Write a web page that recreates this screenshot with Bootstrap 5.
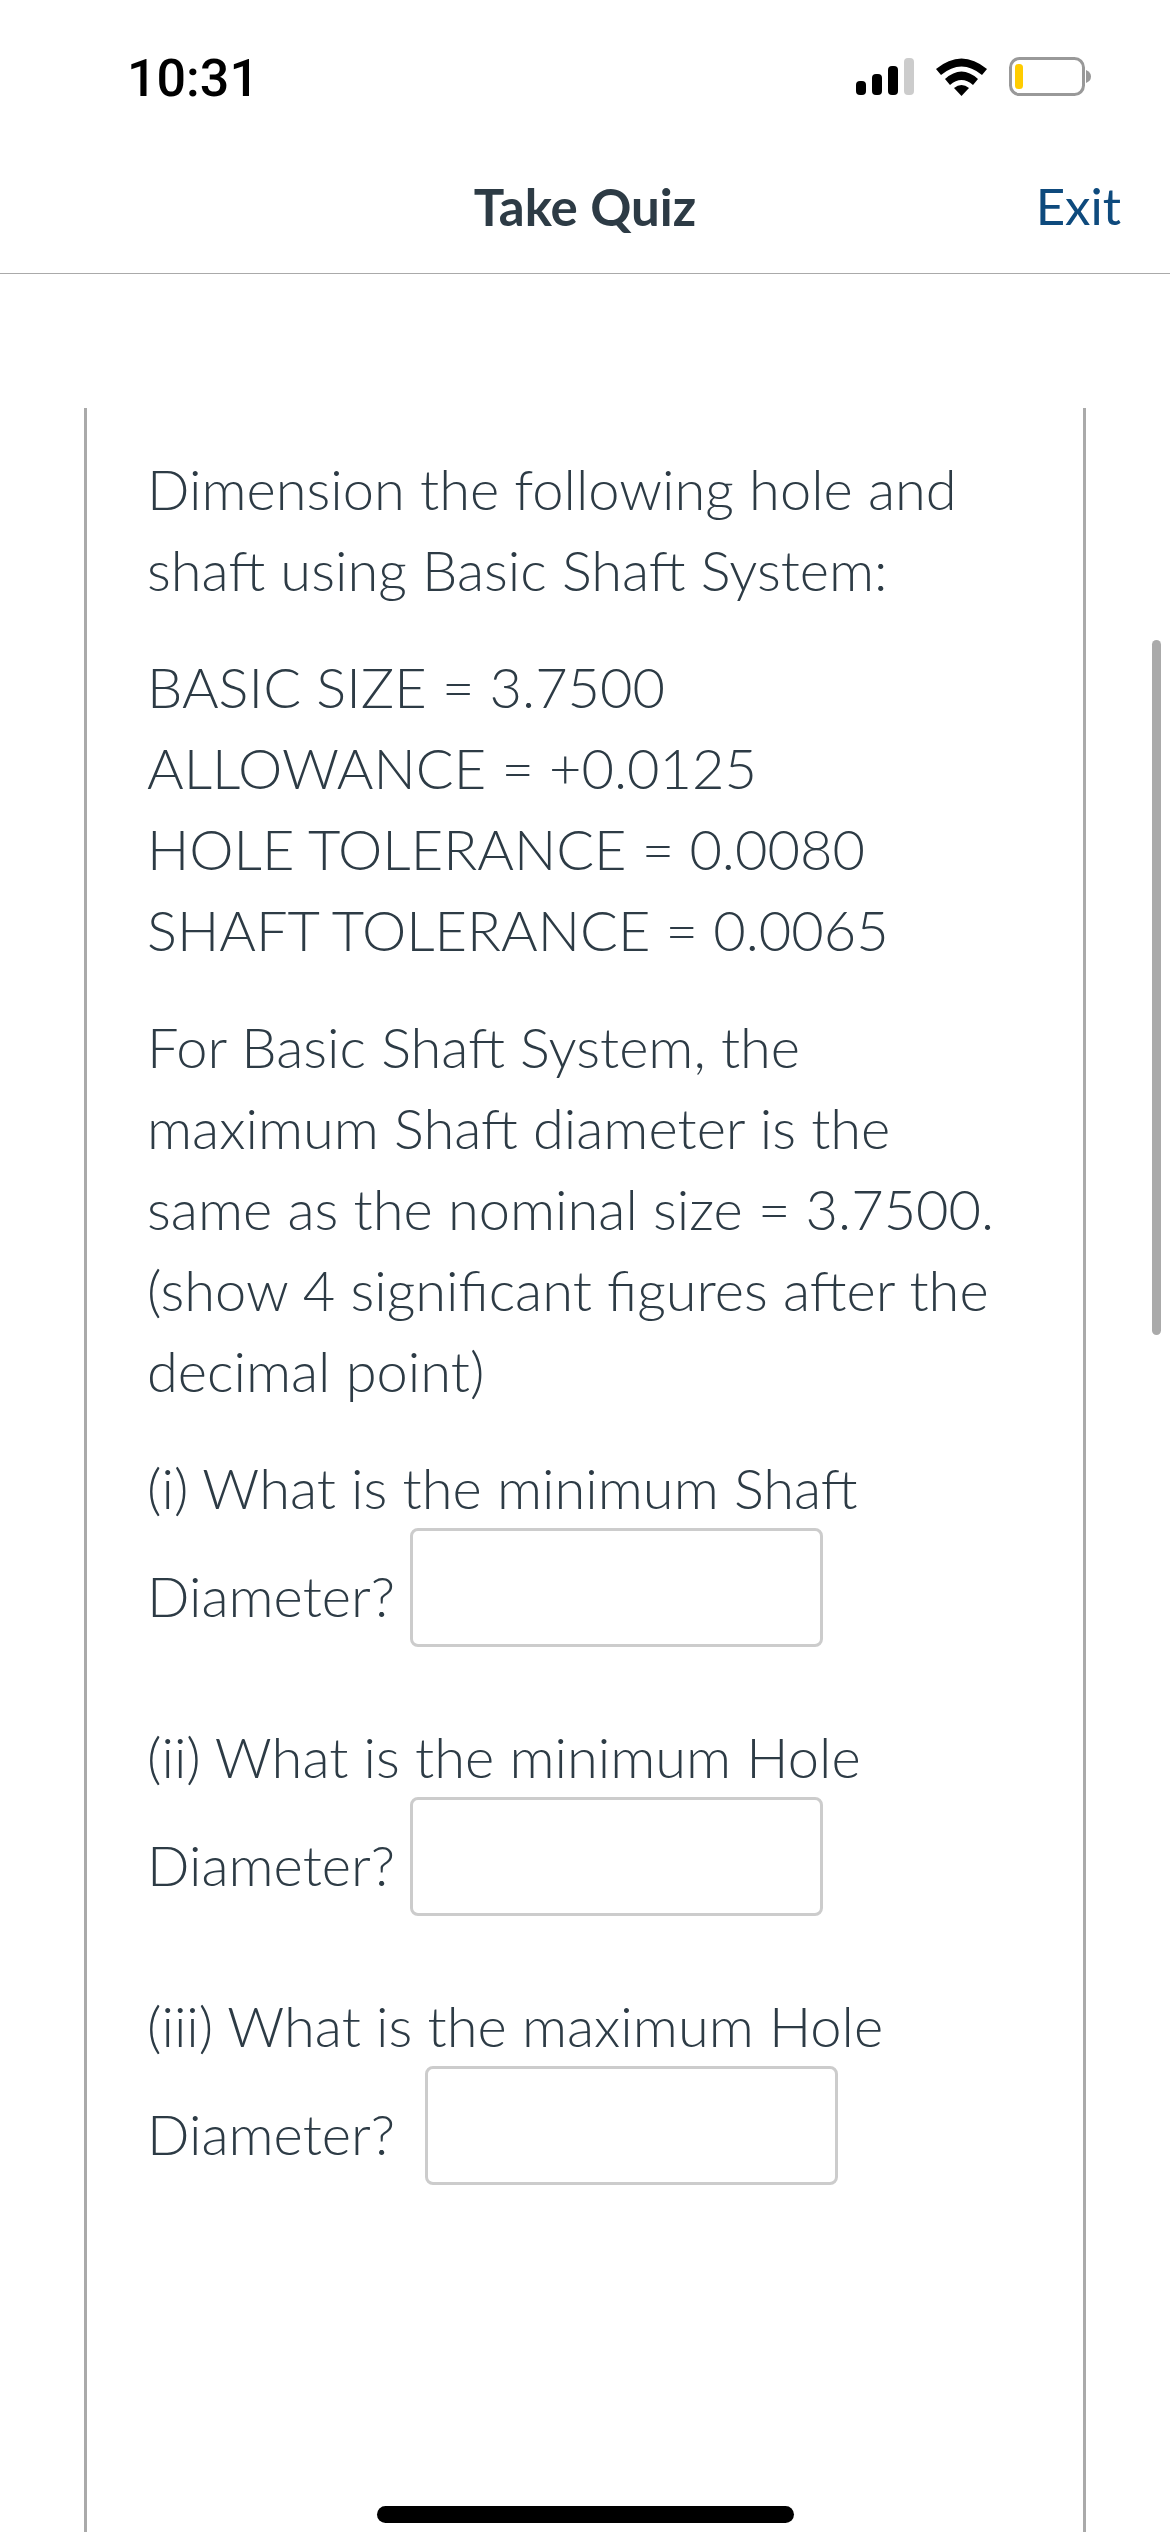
<!DOCTYPE html>
<html lang="en">
<head>
    <meta charset="UTF-8">
    <meta name="viewport" content="width=device-width, initial-scale=1.0">
    <title>Take Quiz</title>
    <link href="https://cdn.jsdelivr.net/npm/bootstrap@5.3.0/dist/css/bootstrap.min.css" rel="stylesheet">
    <style>
        html, body {
            height: 2532px;
            overflow: hidden;
            background-color: #fff;
        }
        .status-bar {
            height: 112px;
            padding: 51px 79px 0 127px;
        }
        .status-time {
            font-family: Roboto, "Liberation Sans", sans-serif;
            font-weight: 500;
            font-size: 52px;
            line-height: 56px;
            color: #000;
        }
        .status-icons {
            margin-top: 6px;
        }
        .quiz-header {
            height: 162px;
            border-bottom: 1px solid #aaa;
            font-family: Lato, "Liberation Sans", sans-serif;
            font-size: 51px;
            padding: 28px 49px 0 0;
        }
        .quiz-title {
            font-weight: 700;
            color: #2d3b45;
            margin-top: 14px;
        }
        .quiz-exit {
            color: #0e4a7d;
            text-decoration: none;
        }
        .quiz-body {
            width: 1002px;
            margin: 134px 0 0 84px;
            height: 2125px;
            border-left: 3px solid #aaa;
            border-right: 3px solid #aaa;
            padding: 40px 71px 0 60px;
            font-family: Lato, "Liberation Sans", sans-serif;
            font-weight: 300;
            font-size: 56px;
            line-height: 81px;
            color: #2d3b45;
        }
        .quiz-body p {
            margin-bottom: 36px;
        }
        .quiz-body p.answer-row {
            margin-bottom: 69px;
        }
        .answer-box {
            display: inline-block;
            vertical-align: 8px;
            width: 413px;
            height: 119px;
            border: 3px solid #ccc;
            border-radius: 8px;
            background: #fff;
        }
        .scroll-thumb {
            position: absolute;
            left: 1152px;
            top: 640px;
            width: 9px;
            height: 695px;
            border-radius: 5px;
            background: #aaa;
        }
        .home-bar {
            position: absolute;
            left: 377px;
            top: 2506px;
            width: 417px;
            height: 17px;
            border-radius: 9px;
            background: #000;
        }
    </style>
</head>
<body class="position-relative">
    <div class="status-bar d-flex justify-content-between align-items-start">
        <div class="status-time">10:31</div>
        <svg class="status-icons" width="236" height="40" viewBox="0 0 236 40" aria-hidden="true">
            <rect x="1" y="24" width="10" height="14" rx="4" fill="#000"/>
            <rect x="17" y="17" width="10" height="21" rx="4" fill="#000"/>
            <rect x="33" y="9" width="10" height="29" rx="4" fill="#000"/>
            <rect x="49" y="1" width="10" height="37" rx="4" fill="#ccc"/>
            <path d="M81 12 Q106.500 -9 132 12 L127 18 Q106.500 1 86 18 Z" fill="#000"/>
            <path d="M90 22 Q106.500 7 123 22 L118 28 Q106.500 18 95 28 Z" fill="#000"/>
            <path d="M99 31 Q106.500 25 114 31 L106.500 39 Z" fill="#000"/>
            <rect x="155.500" y="1.500" width="73" height="36" rx="9" fill="#fff" stroke="#999" stroke-width="3"/>
            <rect x="160" y="7" width="8" height="25" rx="3.500" fill="#fc0"/>
            <path d="M231 13 Q236 15 236 19.500 Q236 24 231 26 Z" fill="#999"/>
        </svg>
    </div>

    <header class="quiz-header d-flex align-items-center position-relative justify-content-end">
        <div class="quiz-title position-absolute top-50 start-50 translate-middle">Take Quiz</div>
        <a class="quiz-exit" href="#">Exit</a>
    </header>

    <main class="quiz-body">
        <p>Dimension the following hole and shaft using Basic Shaft System:</p>
        <p>BASIC SIZE = 3.7500<br>ALLOWANCE = +0.0125<br>HOLE TOLERANCE = 0.0080<br>SHAFT TOLERANCE = 0.0065</p>
        <p>For Basic Shaft System, the maximum Shaft diameter is the same as the nominal size = 3.7500. (show 4 significant figures after the decimal point)</p>
        <p class="answer-row">(i) What is the minimum Shaft Diameter? <input class="answer-box" type="text" aria-label="Minimum shaft diameter"></p>
        <p class="answer-row">(ii) What is the minimum Hole Diameter? <input class="answer-box" type="text" aria-label="Minimum hole diameter"></p>
        <p class="answer-row">(iii) What is the maximum Hole Diameter?&nbsp; <input class="answer-box" type="text" aria-label="Maximum hole diameter"></p>
    </main>

    <div class="scroll-thumb"></div>
    <div class="home-bar"></div>

    <script src="https://cdn.jsdelivr.net/npm/bootstrap@5.3.0/dist/js/bootstrap.bundle.min.js"></script>
</body>
</html>
